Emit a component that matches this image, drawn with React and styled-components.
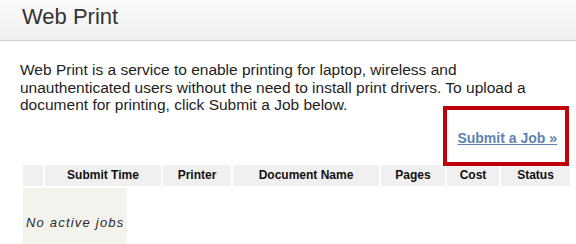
import React from 'react';
import styled, { createGlobalStyle } from 'styled-components';

const GlobalStyle = createGlobalStyle`
  body {
    margin: 0;
    background: #fff;
    font-family: 'Liberation Sans', Arial, sans-serif;
    color: #222;
  }
`;

// Barra superior con el titulo
const Header = styled.header`
  height: 41px;
  box-sizing: border-box;
  padding: 0 0 7px 22px;
  border-bottom: 1px solid #cfcfcf;
  background: linear-gradient(to bottom, #fbfbfb, #f0f0f0);
  display: flex;
  align-items: center;
`;

const Title = styled.h1`
  margin: 0;
  font-size: 22px;
  font-weight: 400;
  color: #333;
  line-height: 1;
`;

const Content = styled.main`
  padding: 0 19px 0 20px;
`;

const Intro = styled.p`
  margin: 20px 0 0;
  max-width: 530px;
  font-size: 15.5px;
  line-height: 17.5px;
  color: #1e1e1e;
`;

const LinkRow = styled.div`
  display: flex;
  justify-content: flex-end;
  margin-top: 15px;
`;

const LinkWrap = styled.span`
  position: relative;
  display: inline-block;
`;

const SubmitLink = styled.a`
  font-size: 14px;
  font-weight: 700;
  line-height: 16px;
  color: #5d82b0;
  text-decoration: underline;
  cursor: pointer;
`;

// Recuadro rojo que resalta el enlace
const Highlight = styled.span`
  position: absolute;
  left: -14px;
  right: -12px;
  top: -23px;
  bottom: -19px;
  border: 4px solid #c00008;
  pointer-events: none;
`;

const Table = styled.div`
  margin: 18px 0 0 3px;
  display: grid;
  grid-template-columns: 20px 116px 68px 146px 64px 52px 69px;
  column-gap: 2px;
  row-gap: 2px;
  width: max-content;
`;

const HeadCell = styled.div`
  background: #f0f0f0;
  height: 21px;
  display: flex;
  align-items: center;
  justify-content: center;
  font-size: 12px;
  font-weight: 700;
  color: #111;
`;

const EmptyCell = styled.div`
  grid-column: 1 / span 2;
  width: 104px;
  height: 58px;
  background: #f3f2ed;
  padding: 27px 0 0 3px;
  box-sizing: border-box;
  font-size: 13px;
  line-height: 15px;
  font-style: italic;
  letter-spacing: 1.2px;
  color: #2a2a2a;
`;

const columns = ['', 'Submit Time', 'Printer', 'Document Name', 'Pages', 'Cost', 'Status'];

const App = () => {
  return (
    <>
      <GlobalStyle />
      <Header>
        <Title>Web Print</Title>
      </Header>
      <Content>
        <Intro>
          Web Print is a service to enable printing for laptop, wireless and
          unauthenticated users without the need to install print drivers. To upload a
          document for printing, click Submit a Job below.
        </Intro>
        <LinkRow>
          <LinkWrap>
            <SubmitLink>Submit a Job »</SubmitLink>
            <Highlight />
          </LinkWrap>
        </LinkRow>
        <Table>
          {columns.map((c, i) => (
            <HeadCell key={i}>{c}</HeadCell>
          ))}
          <EmptyCell>No active jobs</EmptyCell>
        </Table>
      </Content>
    </>
  );
};

export default App;
